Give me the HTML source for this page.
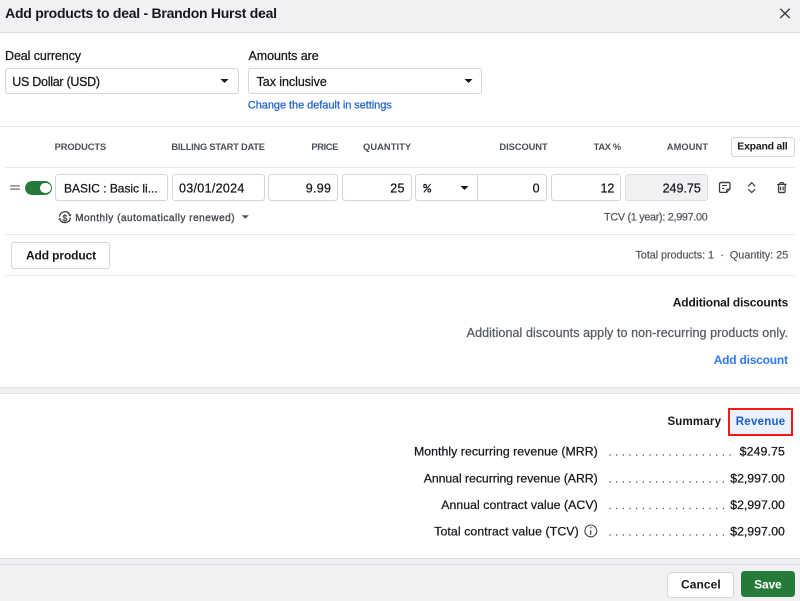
<!DOCTYPE html>
<html><head><meta charset="utf-8"><style>
html,body{margin:0;padding:0;}
body{width:800px;height:601px;position:relative;overflow:hidden;background:#fff;font-family:"Liberation Sans",sans-serif;}
.t{position:absolute;white-space:pre;transform:scale(0.5);transform-origin:0 0;will-change:transform;}
.a{position:absolute;box-sizing:border-box;}
</style></head><body>
<!-- header -->
<div class="a" style="left:0;top:0;width:800px;height:32px;background:#f1f1f3;"></div>
<div class="a" style="left:0;top:32px;width:800px;height:1px;background:#dcdde1;"></div>
<svg class="a" style="left:778px;top:6px;" width="14" height="14" viewBox="0 0 14 14"><path d="M2.3 2.7L11.7 12.1M11.7 2.7L2.3 12.1" stroke="#3b3e44" stroke-width="1.4" fill="none"/></svg>
<!-- selects -->
<div class="a" style="left:5px;top:68px;width:234px;height:26px;border:1px solid #d3d5d9;border-radius:3px;"></div>
<svg class="a" style="left:220px;top:78px;" width="10" height="6" viewBox="0 0 10 6"><path d="M0.5 1H8.5L4.5 5Z" fill="#15171a"/></svg>
<div class="a" style="left:248px;top:68px;width:234px;height:26px;border:1px solid #d3d5d9;border-radius:3px;"></div>
<svg class="a" style="left:463.5px;top:78px;" width="10" height="6" viewBox="0 0 10 6"><path d="M0.5 1H8.5L4.5 5Z" fill="#15171a"/></svg>
<div class="a" style="left:0;top:126px;width:800px;height:1px;background:#e7e8ea;"></div>
<!-- table header -->
<div class="a" style="left:731px;top:137px;width:64px;height:20px;border:1px solid #d3d5d9;border-radius:3px;"></div>
<div class="a" style="left:5px;top:167px;width:790px;height:1px;background:#e7e8ea;"></div>
<!-- row -->
<svg class="a" style="left:8px;top:182px;" width="14" height="10" viewBox="8 182 14 10"><path d="M10.2 185.8H19.8M10.2 189.1H19.8" stroke="#6b6f76" stroke-width="1.3"/></svg>
<div class="a" style="left:25px;top:181px;width:26.5px;height:13.5px;border-radius:7px;background:#257a3a;"></div>
<div class="a" style="left:40px;top:182.5px;width:10.5px;height:10.5px;border-radius:50%;background:#fff;"></div>
<div class="a" style="left:55px;top:174px;width:113px;height:27px;border:1px solid #d3d5d9;border-radius:3px;"></div>
<div class="a" style="left:172px;top:174px;width:93px;height:27px;border:1px solid #d3d5d9;border-radius:3px;"></div>
<div class="a" style="left:268px;top:174px;width:70px;height:27px;border:1px solid #d3d5d9;border-radius:3px;"></div>
<div class="a" style="left:342px;top:174px;width:70px;height:27px;border:1px solid #d3d5d9;border-radius:3px;"></div>
<div class="a" style="left:415px;top:174px;width:132px;height:27px;border:1px solid #d3d5d9;border-radius:3px;"></div>
<div class="a" style="left:477px;top:174px;width:1px;height:27px;background:#d3d5d9;"></div>
<svg class="a" style="left:420px;top:181px;" width="14" height="14" viewBox="420 181 14 14"><ellipse cx="425.1" cy="186" rx="1.4" ry="1.6" stroke="#16181d" stroke-width="1.15" fill="none"/><ellipse cx="429.3" cy="190.45" rx="1.4" ry="1.6" stroke="#16181d" stroke-width="1.15" fill="none"/><path d="M430.5 184L423.8 192.4" stroke="#16181d" stroke-width="1.1"/></svg>
<svg class="a" style="left:460px;top:185px;" width="10" height="6" viewBox="0 0 10 6"><path d="M0.5 1H8.5L4.5 5Z" fill="#15171a"/></svg>
<div class="a" style="left:551px;top:174px;width:70px;height:27px;border:1px solid #d3d5d9;border-radius:3px;"></div>
<div class="a" style="left:625px;top:174px;width:83px;height:27px;border:1px solid #dcdde1;border-radius:3px;background:#f1f1f3;"></div>
<!-- icons -->
<svg class="a" style="left:716px;top:179px;" width="18" height="17" viewBox="0 0 18 17"><path d="M5 3.5H12.5Q14 3.5 14 5V10L10.6 13.4H5Q3.5 13.4 3.5 11.9V5Q3.5 3.5 5 3.5Z" stroke="#3b3e44" stroke-width="1.3" fill="none" stroke-linejoin="round"/><path d="M10.6 13.4V11.6Q10.6 10.1 12.1 10.1H14" stroke="#3b3e44" stroke-width="1.3" fill="none"/><path d="M6 6.5H11M6 9.5H8.5" stroke="#3b3e44" stroke-width="1.2" fill="none"/></svg>
<svg class="a" style="left:745px;top:179px;" width="14" height="16" viewBox="0 0 14 16"><path d="M3.2 7.2L6.7 3.6L10.2 7.2M3.2 10.1L6.7 13.5L10.2 10.1" stroke="#45484e" stroke-width="1.3" fill="none"/></svg>
<svg class="a" style="left:774px;top:179px;" width="16" height="16" viewBox="0 0 16 16"><path d="M3 5.3H12.5M5.9 5.2V4.6Q5.9 3.7 6.9 3.7H8.7Q9.7 3.7 9.7 4.6V5.2M4.5 5.3V12.5Q4.5 13.5 5.5 13.5H10.1Q11.1 13.5 11.1 12.5V5.3M6.5 7.6V11.2M9.1 7.6V11.2" stroke="#3b3e44" stroke-width="1.3" fill="none"/></svg>
<!-- monthly -->
<svg class="a" style="left:54px;top:206px;will-change:transform;" width="30" height="22" viewBox="54 206 30 22"><path d="M59.42 216.72A5.5 5.5 0 0 1 69.88 214.88M70.38 217.68A5.5 5.5 0 0 1 59.92 219.52" stroke="#3b3e44" stroke-width="1.25" fill="none"/><path d="M70.56 216.6L71.5 214.1L68.3 215.5Z M59.24 217.8L58.3 220.3L61.5 218.9Z" fill="#3b3e44"/><text x="64.9" y="220.6" font-size="8.6" text-anchor="middle" fill="#3b3e44" stroke="#3b3e44" stroke-width="0.25" font-family="Liberation Sans">$</text></svg>
<svg class="a" style="left:240.5px;top:214px;" width="9" height="6" viewBox="0 0 9 6"><path d="M0.8 1.2H7.8L4.3 4.8Z" fill="#4b4f57"/></svg>
<div class="a" style="left:5px;top:234px;width:790px;height:1px;background:#e7e8ea;"></div>
<div class="a" style="left:11px;top:242px;width:99px;height:27px;border:1px solid #d3d5d9;border-radius:3px;"></div>
<div class="a" style="left:5px;top:275px;width:790px;height:1px;background:#e7e8ea;"></div>
<!-- band -->
<div class="a" style="left:0;top:387px;width:800px;height:7px;background:#f1f1f3;border-top:1px solid #e1e2e5;border-bottom:1px solid #e1e2e5;"></div>
<!-- revenue box -->
<div class="a" style="left:728px;top:408px;width:65px;height:28px;border:2px solid #ee1c12;background:#eaf2fd;"></div>
<!-- dots -->
<svg class="a" style="left:0;top:0;" width="800" height="601"><rect x="609.35" y="454.35" width="1.3" height="1.3" fill="#555"/><rect x="616.02" y="454.35" width="1.3" height="1.3" fill="#555"/><rect x="622.69" y="454.35" width="1.3" height="1.3" fill="#555"/><rect x="629.36" y="454.35" width="1.3" height="1.3" fill="#555"/><rect x="636.03" y="454.35" width="1.3" height="1.3" fill="#555"/><rect x="642.70" y="454.35" width="1.3" height="1.3" fill="#555"/><rect x="649.37" y="454.35" width="1.3" height="1.3" fill="#555"/><rect x="656.04" y="454.35" width="1.3" height="1.3" fill="#555"/><rect x="662.71" y="454.35" width="1.3" height="1.3" fill="#555"/><rect x="669.38" y="454.35" width="1.3" height="1.3" fill="#555"/><rect x="676.05" y="454.35" width="1.3" height="1.3" fill="#555"/><rect x="682.72" y="454.35" width="1.3" height="1.3" fill="#555"/><rect x="689.39" y="454.35" width="1.3" height="1.3" fill="#555"/><rect x="696.06" y="454.35" width="1.3" height="1.3" fill="#555"/><rect x="702.73" y="454.35" width="1.3" height="1.3" fill="#555"/><rect x="709.40" y="454.35" width="1.3" height="1.3" fill="#555"/><rect x="716.07" y="454.35" width="1.3" height="1.3" fill="#555"/><rect x="722.74" y="454.35" width="1.3" height="1.3" fill="#555"/><rect x="729.41" y="454.35" width="1.3" height="1.3" fill="#555"/></svg>
<svg class="a" style="left:0;top:0;" width="800" height="601"><rect x="609.35" y="481.35" width="1.3" height="1.3" fill="#555"/><rect x="616.02" y="481.35" width="1.3" height="1.3" fill="#555"/><rect x="622.69" y="481.35" width="1.3" height="1.3" fill="#555"/><rect x="629.36" y="481.35" width="1.3" height="1.3" fill="#555"/><rect x="636.03" y="481.35" width="1.3" height="1.3" fill="#555"/><rect x="642.70" y="481.35" width="1.3" height="1.3" fill="#555"/><rect x="649.37" y="481.35" width="1.3" height="1.3" fill="#555"/><rect x="656.04" y="481.35" width="1.3" height="1.3" fill="#555"/><rect x="662.71" y="481.35" width="1.3" height="1.3" fill="#555"/><rect x="669.38" y="481.35" width="1.3" height="1.3" fill="#555"/><rect x="676.05" y="481.35" width="1.3" height="1.3" fill="#555"/><rect x="682.72" y="481.35" width="1.3" height="1.3" fill="#555"/><rect x="689.39" y="481.35" width="1.3" height="1.3" fill="#555"/><rect x="696.06" y="481.35" width="1.3" height="1.3" fill="#555"/><rect x="702.73" y="481.35" width="1.3" height="1.3" fill="#555"/><rect x="709.40" y="481.35" width="1.3" height="1.3" fill="#555"/><rect x="716.07" y="481.35" width="1.3" height="1.3" fill="#555"/><rect x="722.74" y="481.35" width="1.3" height="1.3" fill="#555"/></svg>
<svg class="a" style="left:0;top:0;" width="800" height="601"><rect x="609.35" y="507.85" width="1.3" height="1.3" fill="#555"/><rect x="616.02" y="507.85" width="1.3" height="1.3" fill="#555"/><rect x="622.69" y="507.85" width="1.3" height="1.3" fill="#555"/><rect x="629.36" y="507.85" width="1.3" height="1.3" fill="#555"/><rect x="636.03" y="507.85" width="1.3" height="1.3" fill="#555"/><rect x="642.70" y="507.85" width="1.3" height="1.3" fill="#555"/><rect x="649.37" y="507.85" width="1.3" height="1.3" fill="#555"/><rect x="656.04" y="507.85" width="1.3" height="1.3" fill="#555"/><rect x="662.71" y="507.85" width="1.3" height="1.3" fill="#555"/><rect x="669.38" y="507.85" width="1.3" height="1.3" fill="#555"/><rect x="676.05" y="507.85" width="1.3" height="1.3" fill="#555"/><rect x="682.72" y="507.85" width="1.3" height="1.3" fill="#555"/><rect x="689.39" y="507.85" width="1.3" height="1.3" fill="#555"/><rect x="696.06" y="507.85" width="1.3" height="1.3" fill="#555"/><rect x="702.73" y="507.85" width="1.3" height="1.3" fill="#555"/><rect x="709.40" y="507.85" width="1.3" height="1.3" fill="#555"/><rect x="716.07" y="507.85" width="1.3" height="1.3" fill="#555"/><rect x="722.74" y="507.85" width="1.3" height="1.3" fill="#555"/></svg>
<svg class="a" style="left:0;top:0;" width="800" height="601"><rect x="609.35" y="534.35" width="1.3" height="1.3" fill="#555"/><rect x="616.02" y="534.35" width="1.3" height="1.3" fill="#555"/><rect x="622.69" y="534.35" width="1.3" height="1.3" fill="#555"/><rect x="629.36" y="534.35" width="1.3" height="1.3" fill="#555"/><rect x="636.03" y="534.35" width="1.3" height="1.3" fill="#555"/><rect x="642.70" y="534.35" width="1.3" height="1.3" fill="#555"/><rect x="649.37" y="534.35" width="1.3" height="1.3" fill="#555"/><rect x="656.04" y="534.35" width="1.3" height="1.3" fill="#555"/><rect x="662.71" y="534.35" width="1.3" height="1.3" fill="#555"/><rect x="669.38" y="534.35" width="1.3" height="1.3" fill="#555"/><rect x="676.05" y="534.35" width="1.3" height="1.3" fill="#555"/><rect x="682.72" y="534.35" width="1.3" height="1.3" fill="#555"/><rect x="689.39" y="534.35" width="1.3" height="1.3" fill="#555"/><rect x="696.06" y="534.35" width="1.3" height="1.3" fill="#555"/><rect x="702.73" y="534.35" width="1.3" height="1.3" fill="#555"/><rect x="709.40" y="534.35" width="1.3" height="1.3" fill="#555"/><rect x="716.07" y="534.35" width="1.3" height="1.3" fill="#555"/><rect x="722.74" y="534.35" width="1.3" height="1.3" fill="#555"/></svg>
<svg class="a" style="left:582px;top:523px;" width="16" height="16" viewBox="0 0 16 16"><circle cx="8.8" cy="7.9" r="5.95" stroke="#45484e" stroke-width="1.15" fill="none"/><path d="M8.7 7.2V11.7" stroke="#45484e" stroke-width="1.3"/><circle cx="8.7" cy="4.8" r="0.8" fill="#45484e"/></svg>
<!-- footer -->
<div class="a" style="left:0;top:558px;width:800px;height:43px;background:#f1f1f3;border-top:1px solid #dcdde1;"></div>
<div class="a" style="left:0;top:564px;width:800px;height:1px;background:#dcdde1;"></div>
<div class="a" style="left:667px;top:571.5px;width:67px;height:26px;border:1px solid #d3d5d9;border-radius:4px;background:#fff;"></div>
<div class="a" style="left:741px;top:571px;width:54px;height:26px;border-radius:4px;background:#257a3a;"></div>

<div class="t" style="left:5px;top:4px;padding-left:0.30px;padding-top:0.50px;font-size:28.00px;line-height:36px;color:#16181d;font-weight:700;letter-spacing:-0.525px;">Add products to deal - Brandon Hurst deal</div>
<div class="t" style="left:5px;top:47px;padding-left:0.00px;padding-top:1.00px;font-size:25.00px;line-height:32px;color:#16181d;letter-spacing:-0.175px;-webkit-text-stroke:0.50px #16181d;">Deal currency</div>
<div class="t" style="left:248px;top:47px;padding-left:0.90px;padding-top:1.00px;font-size:25.00px;line-height:32px;color:#16181d;letter-spacing:-0.130px;-webkit-text-stroke:0.50px #16181d;">Amounts are</div>
<div class="t" style="left:12px;top:73px;padding-left:0.50px;padding-top:1.00px;font-size:25.00px;line-height:32px;color:#16181d;letter-spacing:-0.550px;-webkit-text-stroke:0.50px #16181d;">US Dollar (USD)</div>
<div class="t" style="left:256px;top:73px;padding-left:1.20px;padding-top:0.60px;font-size:25.00px;line-height:32px;color:#16181d;letter-spacing:-0.108px;-webkit-text-stroke:0.50px #16181d;">Tax inclusive</div>
<div class="t" style="left:247px;top:97px;padding-left:1.70px;padding-top:1.20px;font-size:22.00px;line-height:29px;color:#1f62c8;letter-spacing:-0.110px;-webkit-text-stroke:0.50px #1f62c8;">Change the default in settings</div>
<div class="t" style="left:54px;top:140px;padding-left:1.30px;padding-top:1.50px;font-size:18.60px;line-height:24px;color:#4b4f57;font-weight:700;letter-spacing:-0.171px;">PRODUCTS</div>
<div class="t" style="left:171px;top:140px;padding-left:0.80px;padding-top:1.50px;font-size:18.60px;line-height:24px;color:#4b4f57;font-weight:700;letter-spacing:-0.441px;">BILLING START DATE</div>
<div class="t" style="left:311px;top:140px;padding-left:0.80px;padding-top:1.50px;font-size:18.60px;line-height:24px;color:#4b4f57;font-weight:700;letter-spacing:-0.725px;">PRICE</div>
<div class="t" style="left:363px;top:140px;padding-left:0.00px;padding-top:1.50px;font-size:18.60px;line-height:24px;color:#4b4f57;font-weight:700;letter-spacing:0.171px;">QUANTITY</div>
<div class="t" style="left:499px;top:140px;padding-left:0.80px;padding-top:1.50px;font-size:18.60px;line-height:24px;color:#4b4f57;font-weight:700;letter-spacing:-0.086px;">DISCOUNT</div>
<div class="t" style="left:593px;top:140px;padding-left:1.30px;padding-top:1.50px;font-size:18.60px;line-height:24px;color:#4b4f57;font-weight:700;letter-spacing:-0.600px;">TAX %</div>
<div class="t" style="left:666px;top:140px;padding-left:1.50px;padding-top:1.50px;font-size:18.60px;line-height:24px;color:#4b4f57;font-weight:700;letter-spacing:0.200px;">AMOUNT</div>
<div class="t" style="left:737px;top:139px;padding-left:0.60px;padding-top:0.00px;font-size:21.00px;line-height:27px;color:#16181d;font-weight:700;letter-spacing:-0.467px;">Expand all</div>
<div class="t" style="left:64px;top:180px;padding-left:0.00px;padding-top:0.80px;font-size:24.00px;line-height:31px;color:#16181d;letter-spacing:-0.050px;-webkit-text-stroke:0.50px #16181d;">BASIC : Basic li...</div>
<div class="t" style="left:179px;top:179px;padding-left:0.00px;padding-top:1.80px;font-size:25.00px;line-height:32px;color:#16181d;letter-spacing:0.622px;-webkit-text-stroke:0.50px #16181d;">03/01/2024</div>
<div class="t" style="left:305px;top:179px;padding-left:1.60px;padding-top:1.80px;font-size:25.00px;line-height:32px;color:#16181d;letter-spacing:0.567px;-webkit-text-stroke:0.50px #16181d;">9.99</div>
<div class="t" style="left:390px;top:179px;padding-left:0.60px;padding-top:1.80px;font-size:25.00px;line-height:32px;color:#16181d;letter-spacing:0.600px;-webkit-text-stroke:0.50px #16181d;">25</div>
<div class="t" style="left:532px;top:179px;padding-left:1.20px;padding-top:1.80px;font-size:25.00px;line-height:32px;color:#16181d;-webkit-text-stroke:0.50px #16181d;">0</div>
<div class="t" style="left:600px;top:179px;padding-left:0.90px;padding-top:1.80px;font-size:25.00px;line-height:32px;color:#16181d;-webkit-text-stroke:0.50px #16181d;">12</div>
<div class="t" style="left:662px;top:179px;padding-left:1.20px;padding-top:1.80px;font-size:25.00px;line-height:32px;color:#16181d;letter-spacing:0.020px;-webkit-text-stroke:0.50px #16181d;">249.75</div>
<div class="t" style="left:75px;top:210px;padding-left:0.40px;padding-top:1.80px;font-size:20.00px;line-height:26px;color:#4b4f57;letter-spacing:1.027px;-webkit-text-stroke:0.80px #4b4f57;">Monthly (automatically renewed)</div>
<div class="t" style="left:604px;top:210px;padding-left:0.10px;padding-top:0.10px;font-size:21.60px;line-height:28px;color:#575b63;letter-spacing:-0.581px;-webkit-text-stroke:0.50px #575b63;">TCV (1 year): 2,997.00</div>
<div class="t" style="left:26px;top:247px;padding-left:0.00px;padding-top:1.00px;font-size:24.00px;line-height:31px;color:#16181d;font-weight:700;letter-spacing:-0.240px;">Add product</div>
<div class="t" style="left:635px;top:247px;padding-left:1.10px;padding-top:1.90px;font-size:21.60px;line-height:28px;color:#575b63;letter-spacing:-0.100px;-webkit-text-stroke:0.50px #575b63;">Total products: 1</div>
<div class="t" style="left:720px;top:247px;padding-left:0.40px;padding-top:1.90px;font-size:21.60px;line-height:28px;color:#575b63;-webkit-text-stroke:0.50px #575b63;">·</div>
<div class="t" style="left:729px;top:247px;padding-left:1.80px;padding-top:1.90px;font-size:21.60px;line-height:28px;color:#575b63;letter-spacing:0.018px;-webkit-text-stroke:0.50px #575b63;">Quantity: 25</div>
<div class="t" style="left:672px;top:294px;padding-left:1.60px;padding-top:1.20px;font-size:24.00px;line-height:31px;color:#16181d;font-weight:700;letter-spacing:-0.337px;">Additional discounts</div>
<div class="t" style="left:466px;top:324px;padding-left:1.30px;padding-top:1.00px;font-size:25.00px;line-height:32px;color:#575b63;letter-spacing:0.170px;-webkit-text-stroke:0.50px #575b63;">Additional discounts apply to non-recurring products only.</div>
<div class="t" style="left:713px;top:351px;padding-left:1.40px;padding-top:1.80px;font-size:24.00px;line-height:31px;color:#2d7cf0;font-weight:700;letter-spacing:-0.436px;">Add discount</div>
<div class="t" style="left:667px;top:413px;padding-left:0.90px;padding-top:1.00px;font-size:23.00px;line-height:30px;color:#16181d;font-weight:700;letter-spacing:0.367px;">Summary</div>
<div class="t" style="left:735px;top:413px;padding-left:1.50px;padding-top:0.60px;font-size:23.00px;line-height:30px;color:#1b5ec6;font-weight:700;letter-spacing:0.500px;">Revenue</div>
<div class="t" style="left:414px;top:443px;padding-left:0.00px;padding-top:0.50px;font-size:24.60px;line-height:32px;color:#16181d;letter-spacing:0.083px;-webkit-text-stroke:0.50px #16181d;">Monthly recurring revenue (MRR)</div>
<div class="t" style="left:423px;top:470px;padding-left:1.40px;padding-top:0.50px;font-size:24.60px;line-height:32px;color:#16181d;letter-spacing:-0.114px;-webkit-text-stroke:0.50px #16181d;">Annual recurring revenue (ARR)</div>
<div class="t" style="left:441px;top:496px;padding-left:0.40px;padding-top:1.50px;font-size:24.60px;line-height:32px;color:#16181d;letter-spacing:0.104px;-webkit-text-stroke:0.50px #16181d;">Annual contract value (ACV)</div>
<div class="t" style="left:434px;top:523px;padding-left:0.50px;padding-top:0.50px;font-size:24.60px;line-height:32px;color:#16181d;letter-spacing:0.184px;-webkit-text-stroke:0.50px #16181d;">Total contract value (TCV)</div>
<div class="t" style="left:739px;top:443px;padding-left:1.20px;padding-top:0.70px;font-size:24.60px;line-height:32px;color:#16181d;letter-spacing:0.283px;-webkit-text-stroke:0.50px #16181d;">$249.75</div>
<div class="t" style="left:730px;top:470px;padding-left:0.50px;padding-top:0.50px;font-size:24.60px;line-height:32px;color:#16181d;letter-spacing:-0.025px;-webkit-text-stroke:0.50px #16181d;">$2,997.00</div>
<div class="t" style="left:730px;top:496px;padding-left:0.50px;padding-top:1.50px;font-size:24.60px;line-height:32px;color:#16181d;letter-spacing:-0.025px;-webkit-text-stroke:0.50px #16181d;">$2,997.00</div>
<div class="t" style="left:730px;top:523px;padding-left:0.50px;padding-top:0.50px;font-size:24.60px;line-height:32px;color:#16181d;letter-spacing:-0.025px;-webkit-text-stroke:0.50px #16181d;">$2,997.00</div>
<div class="t" style="left:681px;top:576px;padding-left:0.00px;padding-top:1.00px;font-size:24.00px;line-height:31px;color:#16181d;font-weight:700;letter-spacing:0.120px;">Cancel</div>
<div class="t" style="left:754px;top:576px;padding-left:0.30px;padding-top:1.00px;font-size:24.00px;line-height:31px;color:#ffffff;font-weight:700;letter-spacing:-0.300px;">Save</div>
</body></html>
